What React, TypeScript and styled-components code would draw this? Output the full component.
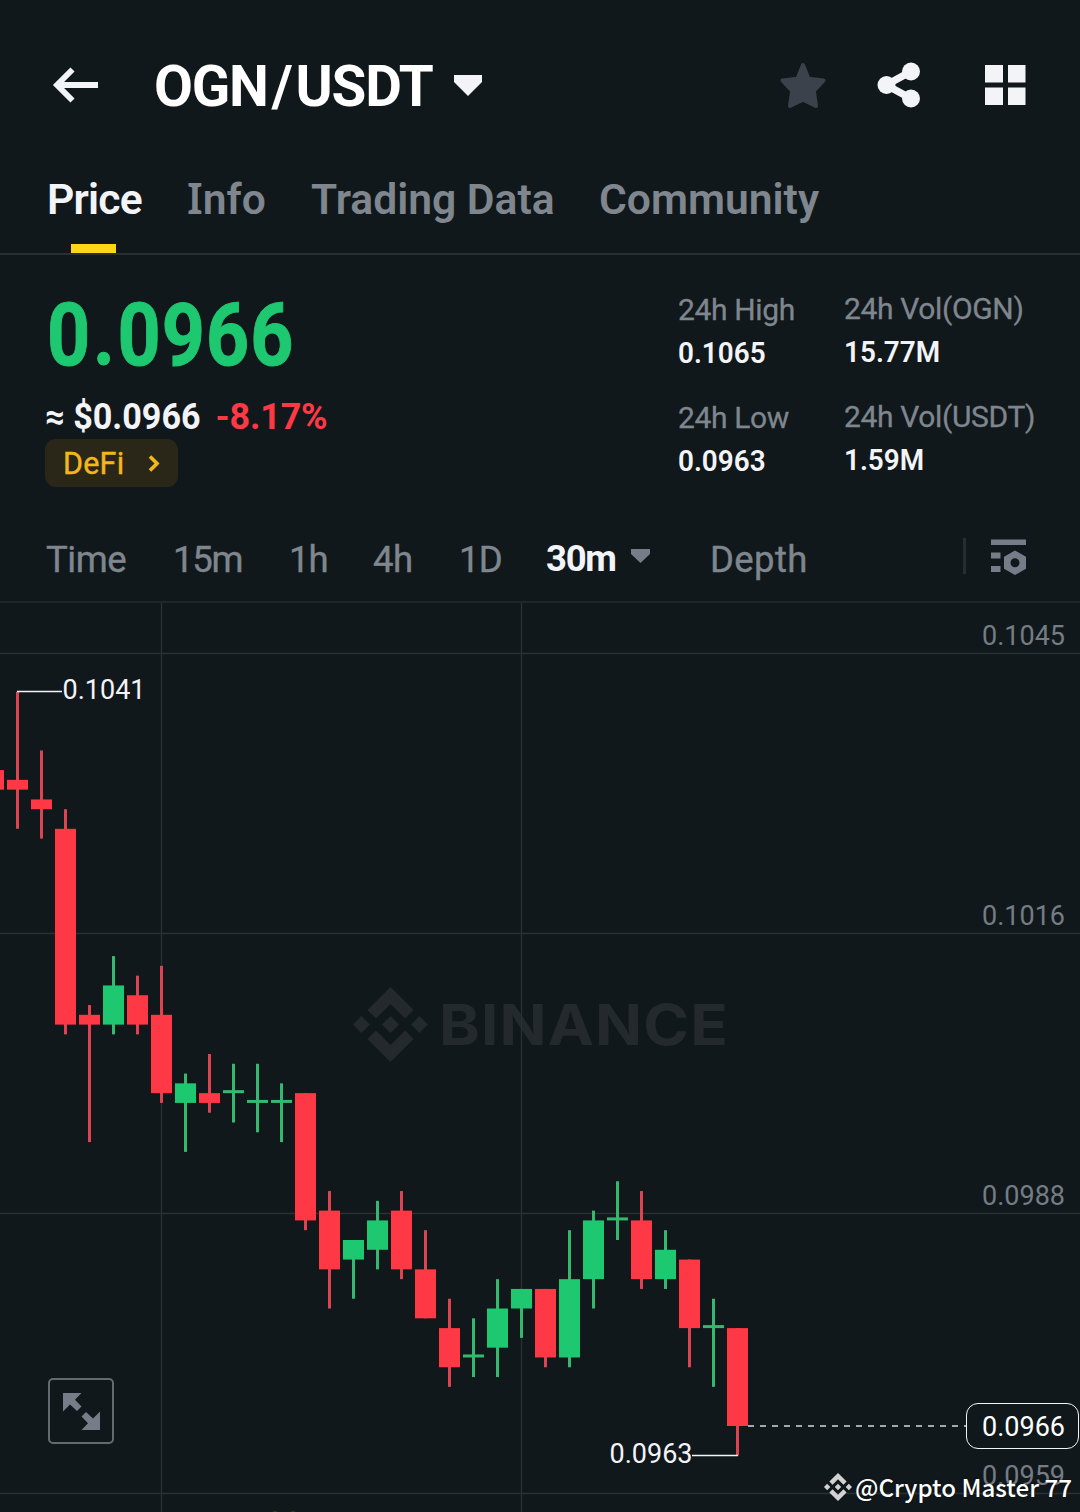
import React from "react";
import styled, { createGlobalStyle } from "styled-components";

const color = {
  bg: "#11181b",
  text: "#ffffff",
  soft: "#f3f4f8",
  muted: "#7f868e",
  dim: "#757c84",
  icon: "#767c88",
  line: "#282f32",
  grid: "#2a3033",
  up: "#1ec870",
  down: "#fe3845",
  wickUp: "#35b96f",
  wickDown: "#e04350",
  yellow: "#fcd516",
  amber: "#f3b71d",
};

const GlobalStyle = createGlobalStyle`
  * { box-sizing: border-box; }
  body {
    margin: 0;
    background: ${color.bg};
    color: ${color.text};
    font-family: Roboto, "Liberation Sans", sans-serif;
    -webkit-font-smoothing: antialiased;
  }
`;

const Screen = styled.main`
  display: flex;
  flex-direction: column;
  width: 1080px;
  height: 1512px;
  overflow: hidden;
  background: ${color.bg};
  white-space: nowrap;
`;

/* Narrows or widens a run of text from its left edge. */
const Squeeze = styled.span<{ $x: number }>`
  display: inline-block;
  transform: scaleX(${(p) => p.$x});
  transform-origin: left;
`;

/* ---------- header ---------- */

const Header = styled.header`
  display: flex;
  align-items: center;
  height: 170px;
  padding: 0 54px 0 52px;
`;

const Pair = styled.h1`
  width: 280px;
  margin: 0 0 0 56px;
  padding-top: 4px;
  font-size: 56.5px;
  line-height: 68px;
  font-weight: 700;
  letter-spacing: -1.2px;
`;

const Slash = styled.span`
  margin: 0 4px 0 4px;
`;

const PairCaret = styled.svg`
  margin-left: 20px;
`;

const Actions = styled.div`
  display: flex;
  align-items: center;
  margin-left: auto;
`;

const ShareIcon = styled.svg`
  margin: 0 63px 0 50px;
`;

/* ---------- page tabs ---------- */

const Tabs = styled.nav`
  display: grid;
  grid-template-columns: 140px 124px 288px auto;
  height: 85px;
  padding-left: 47px;
  border-bottom: 2px solid ${color.line};
`;

const Tab = styled.a<{ $active?: boolean; $spacing?: number }>`
  display: flex;
  flex-direction: column;
  justify-content: space-between;
  align-items: center;
  justify-self: start;
  font-size: 42.6px;
  line-height: 59px;
  font-weight: 600;
  letter-spacing: ${(p) => p.$spacing ?? 0}px;
  color: ${(p) => (p.$active ? color.soft : color.muted)};
`;

const SlabCap = styled.span`
  font-family: "Noto Sans", sans-serif;
  line-height: 1;
`;

const TabMark = styled.span`
  width: 45px;
  height: 9px;
  margin-right: 2px;
  background: ${color.yellow};
`;

/* ---------- price summary ---------- */

const Summary = styled.section`
  display: flex;
  height: 263px;
  padding-left: 45px;
`;

const Quote = styled.div`
  width: 633px;
  padding-top: 31px;
`;

const LastPrice = styled.div`
  padding-left: 2px;
  font-size: 86.5px;
  line-height: 100px;
  font-weight: 700;
  letter-spacing: 1.2px;
  color: ${color.up};
  -webkit-text-stroke: 1px ${color.up};
`;

const Point = styled.span`
  margin: 0 2px;
`;

const Converted = styled.div`
  display: grid;
  grid-template-columns: 170.5px auto;
  margin-top: 9px;
  font-size: 36px;
  line-height: 44px;
  font-weight: 700;
  color: ${color.soft};
`;

const Change = styled.span`
  letter-spacing: -0.2px;
  color: ${color.down};
`;

const Tag = styled.a`
  display: flex;
  align-items: center;
  gap: 24px;
  width: 133px;
  height: 48px;
  padding: 1px 0 0 18px;
  border-radius: 11px;
  background: #2a2719;
  font-size: 30.5px;
  letter-spacing: 0.2px;
  color: ${color.amber};
  -webkit-text-stroke: 0.4px ${color.amber};
`;

const Stats = styled.div`
  display: grid;
  grid-template-columns: 166px 190px;
  padding-top: 34px;
`;

const StatColumn = styled.div<{ $lift?: number }>`
  display: flex;
  flex-direction: column;
  gap: 23px;
  margin-top: -${(p) => p.$lift ?? 0}px;
`;

const Stat = styled.dl`
  margin: 0;
  font-size: 30px;
  line-height: 42px;
`;

const StatLabel = styled.dt`
  letter-spacing: -0.35px;
  color: ${color.muted};
  -webkit-text-stroke: 0.3px ${color.muted};
`;

const StatValue = styled.dd`
  margin: 1px 0 0;
  font-weight: 600;
  color: ${color.soft};
`;

/* ---------- chart intervals ---------- */

const Intervals = styled.nav`
  display: flex;
  align-items: center;
  height: 85px;
  padding: 0 53px 0 46px;
  border-bottom: 2px solid #1f2629;
`;

const IntervalList = styled.div`
  display: grid;
  grid-template-columns: 127px 116px 84px 86px 87px 164px auto;
`;

const Interval = styled.a<{ $active?: boolean; $spacing?: number }>`
  display: flex;
  align-items: center;
  gap: 15px;
  margin-top: ${(p) => (p.$active ? -2 : 0)}px;
  font-size: 36.5px;
  line-height: 48px;
  font-weight: ${(p) => (p.$active ? 700 : 400)};
  letter-spacing: ${(p) => p.$spacing ?? 0}px;
  color: ${(p) => (p.$active ? color.soft : color.muted)};
  -webkit-text-stroke: ${(p) => (p.$active ? 0 : 0.4)}px ${color.muted};
`;

const IntervalCaret = styled.svg`
  margin-bottom: 5px;
`;

const ChartTools = styled.div`
  display: flex;
  align-items: center;
  gap: 25px;
  margin: -7px 0 0 auto;
`;

const ToolRule = styled.span`
  width: 3px;
  height: 36px;
  background: #262c31;
`;

/* ---------- chart ---------- */

const Chart = styled.section`
  position: relative;
  height: 909px;
`;

const Plot = styled.svg`
  position: absolute;
  inset: 0;
  font-family: Roboto, "Liberation Sans", sans-serif;
  font-size: 27px;
`;

const Brand = styled.div`
  position: absolute;
  left: 352.5px;
  top: 383.5px;
  display: flex;
  align-items: center;
  gap: 11px;
  height: 75px;
  color: #24292d;
  font-family: Inter, "Liberation Sans", sans-serif;
  font-size: 57px;
  font-weight: 700;
  letter-spacing: 1.1px;
`;

const Expand = styled.button`
  position: absolute;
  left: 48px;
  top: 775px;
  display: grid;
  place-items: center;
  width: 66px;
  height: 66px;
  padding: 0;
  border: 2px solid #646a70;
  border-radius: 5px;
  background: transparent;
`;

const PriceTag = styled.div`
  position: absolute;
  left: 966px;
  top: 800px;
  width: 113px;
  height: 46px;
  padding-left: 15px;
  border: 1.5px solid ${color.soft};
  border-radius: 12px;
  background: ${color.bg};
  font-size: 27px;
  line-height: 46px;
`;

const Credit = styled.div`
  position: absolute;
  left: 824px;
  bottom: 5px;
  display: flex;
  align-items: center;
  gap: 3px;
  height: 40px;
  font-family: "Noto Sans CJK SC", "Noto Sans", sans-serif;
  font-size: 24.1px;
  font-weight: 500;
  line-height: 40px;
  text-shadow: 0 0 2px rgba(0, 0, 0, 0.7);
`;

/* Candles in units of 0.0001: [high, body top, body bottom, low, rising] */
type Candle = [number, number, number, number, boolean];

const candles: Candle[] = [
  [1033, 1033, 1031, 1031, false],
  [1041, 1032, 1031, 1027, false],
  [1035, 1030, 1029, 1026, false],
  [1029, 1027, 1007, 1006, false],
  [1009, 1008, 1007, 995, false],
  [1014, 1011, 1007, 1006, true],
  [1012, 1010, 1007, 1006, false],
  [1013, 1008, 1000, 999, false],
  [1002, 1001, 999, 994, true],
  [1004, 1000, 999, 998, false],
  [1003, 1000, 1000, 997, true],
  [1003, 999, 999, 996, true],
  [1001, 999, 999, 995, true],
  [1000, 1000, 987, 986, false],
  [990, 988, 982, 978, false],
  [985, 985, 983, 979, true],
  [989, 987, 984, 982, true],
  [990, 988, 982, 981, false],
  [986, 982, 977, 977, false],
  [979, 976, 972, 970, false],
  [977, 973, 973, 971, true],
  [981, 978, 974, 971, true],
  [980, 980, 978, 975, true],
  [980, 980, 973, 972, false],
  [986, 981, 973, 972, true],
  [988, 987, 981, 978, true],
  [991, 987, 987, 985, true],
  [990, 987, 981, 980, false],
  [986, 984, 981, 980, true],
  [983, 983, 976, 972, false],
  [979, 976, 976, 970, true],
  [976, 976, 966, 963, false],
];

const TICK = 9.79;
const yOf = (price: number) => 823 - (price - 966) * TICK;

const axis = [
  { label: "0.1045", y: 50.5 },
  { label: "0.1016", y: 330.5 },
  { label: "0.0988", y: 610.5 },
  { label: "0.0959", y: 890.5 },
];

function CandleShape({ index, data }: { index: number; data: Candle }) {
  const [high, top, bottom, low, rising] = data;
  const left = 7 + (index - 1) * 24;
  const flat = top === bottom;
  return (
    <g>
      <rect x={left + 9} y={yOf(high)} width={3} height={yOf(low) - yOf(high)} fill={rising ? color.wickUp : color.wickDown} />
      <rect
        x={left}
        y={flat ? yOf(top) - 3 : yOf(top)}
        width={21}
        height={flat ? 3 : yOf(bottom) - yOf(top)}
        fill={flat ? color.wickUp : rising ? color.up : color.down}
      />
    </g>
  );
}

function BinanceMark({ size, fill }: { size: number; fill: string }) {
  return (
    <svg width={size} height={size} viewBox="0 0 126.6 126.6" fill={fill}>
      <path d="M38.7 53.2 63.3 28.6 87.9 53.2 102.2 38.9 63.3 0 24.4 38.9z" />
      <path d="M0 63.3 14.3 49 28.6 63.3 14.3 77.6z" />
      <path d="M38.7 73.4 63.3 98 87.9 73.4 102.2 87.7 63.3 126.6 24.4 87.7z" />
      <path d="M98 63.3 112.3 49 126.6 63.3 112.3 77.6z" />
      <path d="M77.8 63.3 63.3 48.8 48.8 63.3 63.3 77.8z" />
    </svg>
  );
}

function StatItem({ label, value }: { label: string; value: string }) {
  return (
    <Stat>
      <StatLabel>{label}</StatLabel>
      <StatValue>
        <Squeeze $x={0.93}>{value}</Squeeze>
      </StatValue>
    </Stat>
  );
}

export default function App() {
  return (
    <Screen>
      <GlobalStyle />
      <Header>
        <svg width="46" height="36" viewBox="0 0 46 36" fill="none" stroke={color.soft} strokeWidth="5.8">
          <path d="M46 18H5M20.5 2.5 5 18 20.5 33.5" />
        </svg>
        <Pair>
          OGN<Slash>/</Slash>USDT
        </Pair>
        <PairCaret width="28" height="22" viewBox="0 0 28 22" fill={color.soft}>
          <path d="M0 1H28V8L14 22 0 8z" />
        </PairCaret>
        <Actions>
          <svg width="46" height="46" viewBox="0 0 46 46" fill="#3c424b" stroke="#3c424b" strokeWidth="4" strokeLinejoin="round">
            <path d="M23 3 28.5 16.8 43.5 18.5 33.8 28.8 36 44 23 37.7 10 44 12.2 28.8 2.5 18.5 17.5 16.8z" />
          </svg>
          <ShareIcon width="46" height="46" viewBox="0 0 46 46" fill={color.soft}>
            <path d="M35 9.5 10 23 35 36.5" fill="none" stroke={color.soft} strokeWidth="7.2" />
            <circle cx="10.5" cy="23" r="9" />
            <circle cx="35" cy="9.5" r="9" />
            <circle cx="35" cy="36.5" r="9" />
          </ShareIcon>
          <svg width="41" height="40" viewBox="0 0 41 40" fill={color.soft}>
            <path d="M0 0h18v17.5H0zM23 0h17.5v17.5H23zM0 22.5h18V40H0zM23 22.5h17.5V40H23z" />
          </svg>
        </Actions>
      </Header>

      <Tabs>
        <Tab $active $spacing={-0.8}>
          Price
          <TabMark />
        </Tab>
        <Tab>
          <span>
            <SlabCap>I</SlabCap>nfo
          </span>
        </Tab>
        <Tab>Trading Data</Tab>
        <Tab>Community</Tab>
      </Tabs>

      <Summary>
        <Quote>
          <LastPrice>
            <Squeeze $x={0.87}>
              0<Point>.</Point>0966
            </Squeeze>
          </LastPrice>
          <Converted>
            <Squeeze $x={0.948}>≈ $0.0966</Squeeze>
            <Change>-8.17%</Change>
          </Converted>
          <Tag>
            DeFi
            <svg width="12" height="17" viewBox="0 0 12 17" fill="none" stroke={color.amber} strokeWidth="3.6">
              <path d="M2 1.5 9 8.5 2 15.5" />
            </svg>
          </Tag>
        </Quote>
        <Stats>
          <StatColumn>
            <StatItem label="24h High" value="0.1065" />
            <StatItem label="24h Low" value="0.0963" />
          </StatColumn>
          <StatColumn $lift={1}>
            <StatItem label="24h Vol(OGN)" value="15.77M" />
            <StatItem label="24h Vol(USDT)" value="1.59M" />
          </StatColumn>
        </Stats>
      </Summary>

      <Intervals>
        <IntervalList>
          <Interval $spacing={-0.5}>Time</Interval>
          <Interval $spacing={-1.3}>15m</Interval>
          <Interval $spacing={-1}>1h</Interval>
          <Interval $spacing={-0.5}>4h</Interval>
          <Interval $spacing={-0.8}>1D</Interval>
          <Interval $active $spacing={-1.3}>
            30m
            <IntervalCaret width="19" height="14" viewBox="0 0 19 14" fill={color.icon}>
              <path d="M0 0H19V5L9.5 14 0 5z" />
            </IntervalCaret>
          </Interval>
          <Interval $spacing={0.4}>Depth</Interval>
        </IntervalList>
        <ChartTools>
          <ToolRule />
          <svg width="36" height="37" viewBox="0 0 36 37" fill={color.icon}>
            <path d="M0 1.5h35V7H0zM0 14.5h9.5v6H0zM0 28h9.5v6H0z" />
            <path fillRule="evenodd" d="M24 12.5 35 18.7v12L24 37 13 30.7V18.7zM24 20.3a4.5 4.5 0 1 0 0 9 4.5 4.5 0 0 0 0-9z" />
          </svg>
        </ChartTools>
      </Intervals>

      <Chart>
        <Brand>
          <BinanceMark size={75} fill="#24292d" />
          <Squeeze $x={1.083}>BINANCE</Squeeze>
        </Brand>
        <Plot width="1080" height="909" viewBox="0 0 1080 909">
          <g stroke={color.grid} strokeWidth="1.3">
            {axis.map((row) => (
              <line key={row.label} x1="0" x2="1080" y1={row.y} y2={row.y} />
            ))}
            <line x1="161.5" x2="161.5" y1="0" y2="909" />
            <line x1="521.5" x2="521.5" y1="0" y2="909" />
          </g>
          {axis.map((row) => (
            <text key={row.label} x="982" y={row.y - 8.5} fill={color.dim}>
              {row.label}
            </text>
          ))}
          {candles.map((data, index) => (
            <CandleShape key={index} index={index} data={data} />
          ))}
          <g stroke={color.soft} strokeWidth="1.6">
            <path d="M17 88.5H62" />
            <path d="M692 852.5H738" />
            <path d="M748 823H967" strokeDasharray="6 6" stroke="#d5d8da" />
          </g>
          <g fill={color.soft}>
            <text x="62.5" y="95.5">0.1041</text>
            <text x="609.5" y="860">0.0963</text>
          </g>
          <path d="M273 908.5h4M291 908.5h4" stroke="#2c3416" strokeWidth="1" />
        </Plot>
        <Expand aria-label="Expand chart">
          <svg width="37" height="37" viewBox="0 0 37 37" fill={color.icon}>
            <path d="M0 0H18.5L12 6.7 18.5 13.5 14 18 7 11.5 0 18.5z" />
            <path d="M37 37H18.5L25 30.3 18.5 23.5 23 19 30 25.5 37 18.5z" />
          </svg>
        </Expand>
        <PriceTag>0.0966</PriceTag>
        <Credit>
          <BinanceMark size={28} fill="#d2d2d2" />
          @Crypto Master 77
        </Credit>
      </Chart>
    </Screen>
  );
}
